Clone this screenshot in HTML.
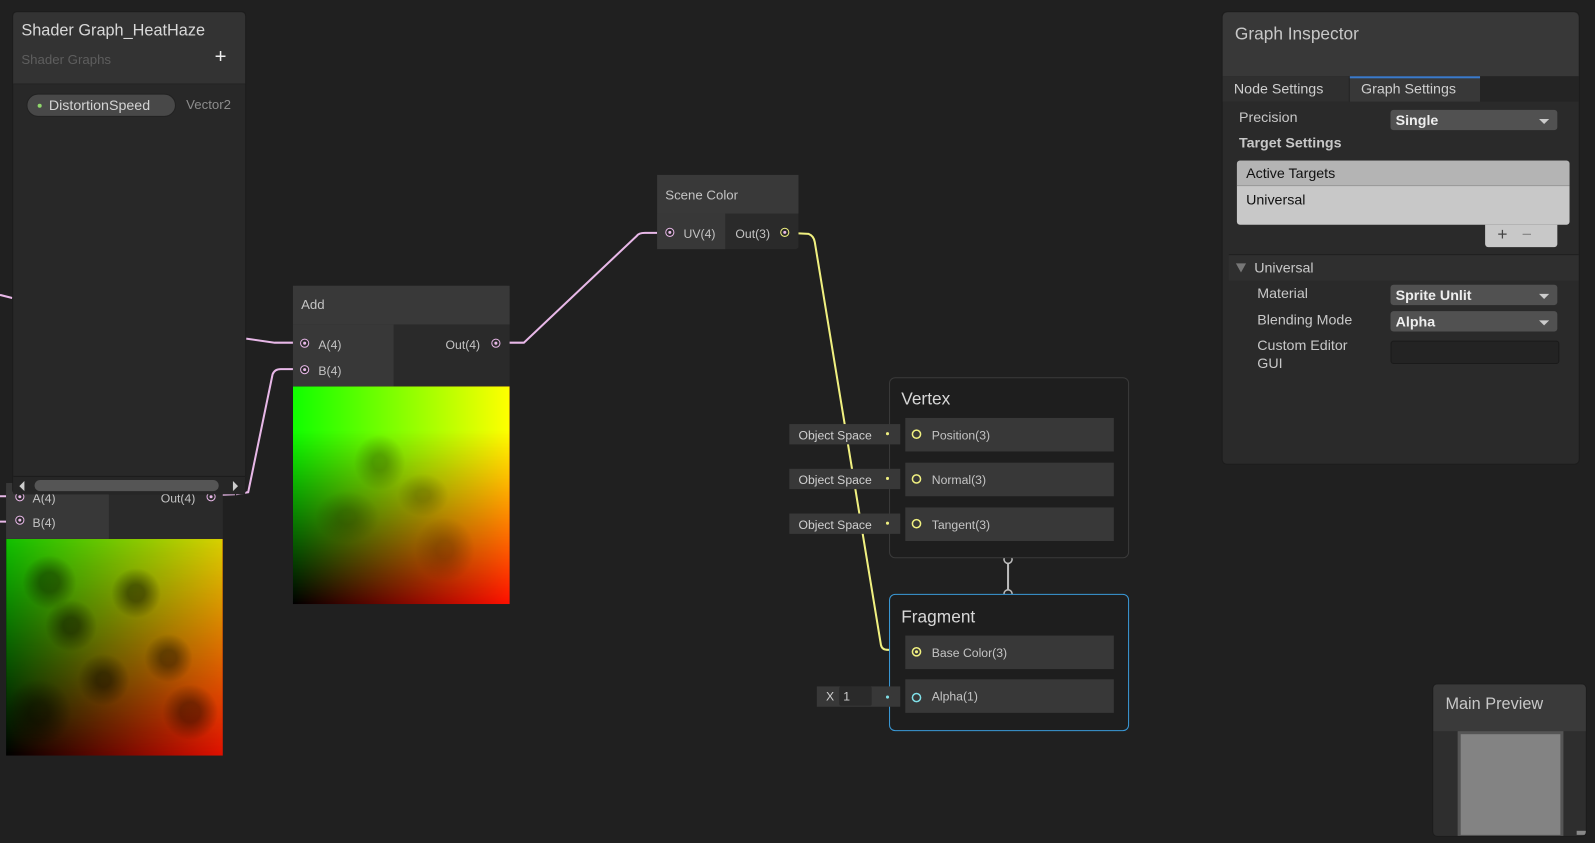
<!DOCTYPE html>
<html><head><meta charset="utf-8"><style>
*{box-sizing:border-box;margin:0;padding:0}
html,body{width:1595px;height:843px;overflow:hidden;background:#202020;font-family:"Liberation Sans",sans-serif}
#s{position:absolute;left:0;top:0;width:1568px;height:829px;transform:scale(1.0172,1.0169);transform-origin:0 0}
.a{position:absolute}
.t{color:#c4c4c4;font-size:12px;white-space:nowrap}
.node{position:absolute;background:#2a2a2a;border:1px solid #1a1a1a;border-radius:3px}
.hdr{background:#393939}
.port{position:absolute;width:9px;height:9px;border-radius:50%;border:1.5px solid #e8b8e8;background:#2a2a2a}
.port::after{content:"";position:absolute;left:1.5px;top:1.5px;width:3px;height:3px;border-radius:50%;background:#e8b8e8}
.dd{position:absolute;background:#515151;border-radius:3px;color:#eee;font-weight:bold;font-size:14px;padding:3px 5px}
.dd::after{content:"";position:absolute;right:8px;top:9px;border:5px solid transparent;border-top:5px solid #ccc}
.lbl{position:absolute;color:#c8c8c8;font-size:14px}
.os{position:absolute;background:#383838;color:#d0d0d0;font-size:12px;padding:4px 9px;height:20px;width:109px}
.slot{position:absolute;left:15px;width:205px;height:33px;background:#383838;color:#c4c4c4;font-size:12px;padding:10px 0 0 26px}
</style></head><body><div id="s">

<svg class="a" style="left:0;top:0" width="1568" height="829">
<g fill="none" stroke-width="2">
<path d="M0 290 L12 293" stroke="#e8b8e8"/>
<path d="M242 333 L270 337 L292 337" stroke="#e8b8e8"/>
<path d="M232 486 L244 484 L268 368 Q270 363 276 363 L292 363" stroke="#e8b8e8"/>
<path d="M0 488 L10 488 M0 513 L12 513 M205 487 L231 486" stroke="#e8b8e8"/>
<path d="M492 337 L515 337 L626 232 Q628 229 634 229 L656 229" stroke="#e8b8e8"/>
<path d="M775 229 L795 230 Q800 232 801 238 L866 634 Q867 639 872 639 L898 640" stroke="#f0f080"/>
<path d="M873 427 L898 427 M873 471 L898 471 M873 515 L898 515" stroke="#f0f080"/>
<path d="M873 686 L898 686" stroke="#80e0e8"/>
<path d="M991 552 L991 582" stroke="#bbb"/>
</g>
<circle cx="991" cy="550" r="4" fill="#202020" stroke="#bbb" stroke-width="1.5"/>
<circle cx="991" cy="584" r="4" fill="#202020" stroke="#bbb" stroke-width="1.5"/>
</svg>

<div class="node" style="left:6px;top:475px;width:213px;height:268px;border:none">
 <div class="a" style="left:0;top:0;width:101px;height:55px;background:#383838"></div>
 <div class="port" style="left:9px;top:9px"></div><div class="t a" style="left:26px;top:8px">A(4)</div>
 <div class="port" style="left:9px;top:32px"></div><div class="t a" style="left:26px;top:32px">B(4)</div>
 <div class="t a" style="left:152px;top:8px">Out(4)</div><div class="port" style="left:197px;top:9px"></div>
 <div class="a" style="left:0;top:55px;width:213px;height:213px;background:linear-gradient(to right,#000,#e01000)"></div>
 <div class="a" style="left:0;top:55px;width:213px;height:213px;background:linear-gradient(to right,#10c000,#d8d000);-webkit-mask-image:linear-gradient(to bottom,#000,transparent)"></div>
 <div class="a" style="left:0;top:55px;width:213px;height:213px;background:radial-gradient(circle at 30% 40%,rgba(0,0,0,.45) 0 4%,transparent 13%),radial-gradient(circle at 60% 25%,rgba(0,0,0,.45) 0 4%,transparent 12%),radial-gradient(circle at 45% 65%,rgba(0,0,0,.45) 0 4%,transparent 14%),radial-gradient(circle at 75% 55%,rgba(0,0,0,.4) 0 4%,transparent 12%),radial-gradient(circle at 15% 80%,rgba(0,0,0,.4) 0 4%,transparent 13%),radial-gradient(circle at 85% 80%,rgba(0,0,0,.4) 0 4%,transparent 11%),radial-gradient(circle at 20% 20%,rgba(0,0,0,.4) 0 4%,transparent 11%)"></div>
</div>

<div class="a" style="left:12px;top:11px;width:230px;height:475px;background:#282828;border-radius:4px;border:1px solid #1c1c1c">
 <div class="a" style="left:0;top:0;width:228px;height:71px;background:#333;border-radius:4px 4px 0 0;border-bottom:1px solid #222"></div>
 <div class="a" style="left:8px;top:10px;color:#d8d8d8;font-size:16px">Shader Graph_HeatHaze</div>
 <div class="a" style="left:8px;top:39px;color:#5e5e5e;font-size:13px">Shader Graphs</div>
 <div class="a" style="left:198px;top:33px;color:#eee;font-size:20px">+</div>
 <div class="a" style="left:13px;top:80px;width:147px;height:23px;border-radius:12px;background:#484848;border:1px solid #222;color:#d4d4d4;font-size:14px;padding:2px 0 0 21px">DistortionSpeed</div>
 <div class="a" style="left:24px;top:90px;width:4px;height:4px;border-radius:50%;background:#8fd86b"></div>
 <div class="a" style="left:170px;top:83px;color:#8c8c8c;font-size:13px">Vector2</div>
 <div class="a" style="left:0;top:456px;width:228px;height:18px;background:#262626;border-top:1px solid #1c1c1c"></div>
 <div class="a" style="left:21px;top:460px;width:181px;height:11px;border-radius:6px;background:#555"></div>
 <div class="a" style="left:6px;top:461px;border:5px solid transparent;border-right:5px solid #ccc;border-left:0"></div>
 <div class="a" style="left:216px;top:461px;border:5px solid transparent;border-left:5px solid #ccc;border-right:0"></div>
</div>

<div class="node" style="left:288px;top:281px;width:213px;height:313px;border:none">
 <div class="hdr a" style="left:0;top:0;width:213px;height:38px"></div>
 <div class="t a" style="left:8px;top:11px;font-size:13px">Add</div>
 <div class="a" style="left:0;top:38px;width:99px;height:61px;background:#383838"></div>
 <div class="port" style="left:7px;top:52px"></div><div class="t a" style="left:25px;top:51px">A(4)</div>
 <div class="port" style="left:7px;top:78px"></div><div class="t a" style="left:25px;top:77px">B(4)</div>
 <div class="t a" style="left:150px;top:51px">Out(4)</div><div class="port" style="left:195px;top:52px"></div>
 <div class="a" style="left:0;top:99px;width:213px;height:214px;background:linear-gradient(to right,#000,#ff1000)"></div>
 <div class="a" style="left:0;top:99px;width:213px;height:214px;background:linear-gradient(to right,#10ff00,#ffff00);-webkit-mask-image:linear-gradient(to bottom,#000 20%,transparent)"></div>
 <div class="a" style="left:0;top:99px;width:213px;height:214px;background:radial-gradient(ellipse at 40% 35%,rgba(0,0,0,.25) 0 4%,transparent 14%),radial-gradient(ellipse at 60% 50%,rgba(0,0,0,.2) 0 4%,transparent 14%),radial-gradient(ellipse at 25% 60%,rgba(0,0,0,.2) 0 4%,transparent 14%),radial-gradient(ellipse at 70% 75%,rgba(0,0,0,.2) 0 4%,transparent 14%)"></div>
</div>

<div class="node" style="left:646px;top:172px;width:139px;height:73px;border:none">
 <div class="hdr a" style="left:0;top:0;width:139px;height:38px"></div>
 <div class="t a" style="left:8px;top:12px;font-size:13px">Scene Color</div>
 <div class="a" style="left:0;top:38px;width:67px;height:35px;background:#383838"></div>
 <div class="port" style="left:8px;top:52px"></div><div class="t a" style="left:26px;top:51px">UV(4)</div>
 <div class="t a" style="left:77px;top:51px">Out(3)</div>
 <div class="port" style="left:121px;top:52px;border-color:#f0f080"></div>
</div>

<div class="a" style="left:874px;top:371px;width:236px;height:178px;border:1px solid #3a3a3a;border-radius:6px;background:#1e1e1e">
 <div class="a" style="left:11px;top:11px;color:#d8d8d8;font-size:17px">Vertex</div>
 <div class="slot" style="top:39px">Position(3)</div>
 <div class="slot" style="top:83px">Normal(3)</div>
 <div class="slot" style="top:127px">Tangent(3)</div>
</div>
<svg class="a" style="left:890px;top:420px" width="20" height="110">
<g fill="#383838" stroke="#f0f080" stroke-width="1.5"><circle cx="11" cy="7" r="4"/><circle cx="11" cy="51" r="4"/><circle cx="11" cy="95" r="4"/></g></svg>
<div class="os" style="left:776px;top:417px">Object Space</div>
<div class="os" style="left:776px;top:461px">Object Space</div>
<div class="os" style="left:776px;top:505px">Object Space</div>
<div class="a" style="left:871px;top:425px;width:3px;height:3px;background:#f0f080;border-radius:50%"></div>
<div class="a" style="left:871px;top:469px;width:3px;height:3px;background:#f0f080;border-radius:50%"></div>
<div class="a" style="left:871px;top:513px;width:3px;height:3px;background:#f0f080;border-radius:50%"></div>

<div class="a" style="left:874px;top:584px;width:236px;height:135px;border:1.5px solid #3a9ad8;border-radius:6px;background:#1e1e1e">
 <div class="a" style="left:11px;top:12px;color:#d8d8d8;font-size:17px">Fragment</div>
 <div class="slot" style="top:40px">Base Color(3)</div>
 <div class="slot" style="top:83px">Alpha(1)</div>
</div>
<svg class="a" style="left:890px;top:630px" width="20" height="70">
<circle cx="11" cy="11" r="4" fill="#383838" stroke="#f0f080" stroke-width="1.5"/><circle cx="11" cy="11" r="1.5" fill="#f0f080"/>
<circle cx="11" cy="56" r="4" fill="#383838" stroke="#80e0e8" stroke-width="1.5"/></svg>
<div class="a" style="left:803px;top:675px;width:82px;height:20px;background:#383838"></div>
<div class="a" style="left:812px;top:678px;color:#d0d0d0;font-size:12px">X</div>
<div class="a" style="left:825px;top:675px;width:32px;height:19px;background:#2a2a2a;border-radius:2px;color:#d0d0d0;font-size:12px;padding:3px 4px">1</div>
<div class="a" style="left:871px;top:684px;width:3px;height:3px;background:#80e0e8;border-radius:50%"></div>

<div class="a" style="left:1201px;top:11px;width:352px;height:446px;background:#2a2a2a;border-radius:5px;border:1px solid #1c1c1c">
 <div class="a" style="left:0;top:0;width:350px;height:63px;background:#383838;border-radius:5px 5px 0 0"></div>
 <div class="a" style="left:12px;top:12px;color:#c8c8c8;font-size:17px">Graph Inspector</div>
 <div class="a" style="left:0;top:63px;width:350px;height:25px;background:#242424"></div>
 <div class="a" style="left:0;top:63px;width:124px;height:25px;background:#2f2f2f"></div>
 <div class="lbl" style="left:11px;top:67px;color:#cfcfcf">Node Settings</div>
 <div class="a" style="left:125px;top:63px;width:128px;height:25px;background:#383838;border-top:2px solid #3a7acb"></div>
 <div class="lbl" style="left:136px;top:67px;color:#cfcfcf">Graph Settings</div>
 <div class="lbl" style="left:16px;top:95px">Precision</div>
 <div class="dd" style="left:165px;top:96px;width:164px;height:20px;padding-top:2px">Single</div>
 <div class="lbl" style="left:16px;top:120px;font-weight:bold">Target Settings</div>
 <div class="a" style="left:14px;top:146px;width:327px;height:63px;background:#c8c8c8;border-radius:3px;overflow:hidden">
  <div style="height:25px;background:#b4b4b4;border-bottom:1px solid #999;color:#111;font-size:14px;padding:4px 9px">Active Targets</div>
  <div style="color:#111;font-size:14px;padding:5px 9px">Universal</div>
 </div>
 <div class="a" style="left:258px;top:209px;width:71px;height:22px;background:#c8c8c8;border-radius:0 0 3px 3px;color:#444;font-size:17px;padding:0 0 0 12px">+<span style="margin-left:14px;color:#888">−</span></div>
 <div class="a" style="left:6px;top:238px;width:344px;height:1px;background:#1e1e1e"></div>
 <div class="a" style="left:6px;top:239px;width:344px;height:25px;background:#2f2f2f"></div>
 <div class="a" style="left:13px;top:247px;border:5px solid transparent;border-top:9px solid #777;border-bottom:0"></div>
 <div class="lbl" style="left:31px;top:243px">Universal</div>
 <div class="lbl" style="left:34px;top:268px">Material</div>
 <div class="dd" style="left:165px;top:268px;width:164px;height:20px;padding-top:2px">Sprite Unlit</div>
 <div class="lbl" style="left:34px;top:294px">Blending Mode</div>
 <div class="dd" style="left:165px;top:294px;width:164px;height:20px;padding-top:2px">Alpha</div>
 <div class="lbl" style="left:34px;top:318px;line-height:18px">Custom Editor<br>GUI</div>
 <div class="a" style="left:165px;top:323px;width:166px;height:23px;background:#232323;border:1px solid #1a1a1a;border-radius:3px"></div>
</div>

<div class="a" style="left:1408px;top:672px;width:152px;height:151px;background:#2e2e2e;border-radius:5px;overflow:hidden;border:1px solid #1c1c1c">
 <div class="a" style="left:0;top:0;width:152px;height:46px;background:#3a3a3a"></div>
 <div class="a" style="left:12px;top:11px;color:#c8c8c8;font-size:16px">Main Preview</div>
 <div class="a" style="left:24px;top:46px;width:104px;height:105px;background:#555"></div>
 <div class="a" style="left:27px;top:49px;width:98px;height:99px;background:#838383"></div>
 <div class="a" style="left:141px;top:144px;width:12px;height:4px;background:#888"></div>
</div>

</div></body></html>
